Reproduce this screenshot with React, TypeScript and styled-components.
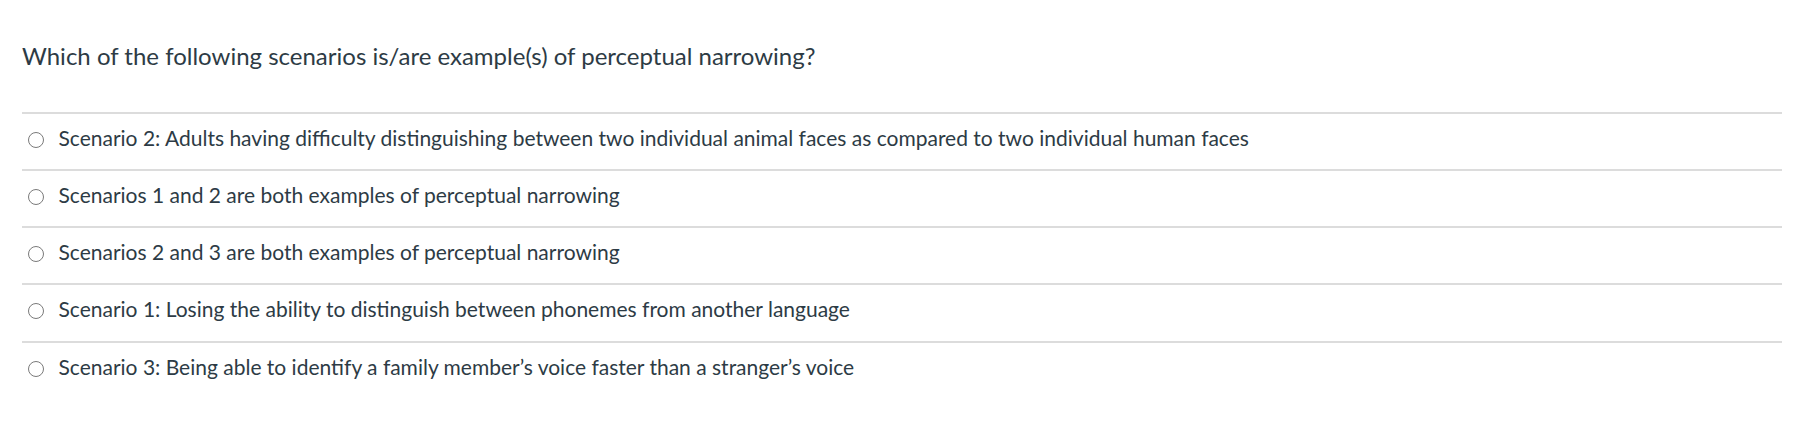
import React from 'react';
import styled, { createGlobalStyle } from 'styled-components';

const GlobalStyle = createGlobalStyle`
  body {
    margin: 0;
    background: #fff;
    font-family: Lato, "Open Sans", "Liberation Sans", sans-serif;
    color: #2d3b45;
  }
`;

const Page = styled.div`
  padding: 42px 18px 0 22px;
`;

const Question = styled.h2`
  margin: 0 0 41px;
  font-size: 24px;
  font-weight: 400;
  line-height: 1.2;
`;

const AnswerList = styled.div`
  display: flex;
  flex-direction: column;
`;

const AnswerRow = styled.label<{ $last?: boolean }>`
  display: flex;
  align-items: flex-start;
  border-top: 2px solid #dcdcdc;
  padding: 11px 0 ${({ $last }) => ($last ? '40px' : '19px')};
  cursor: pointer;
`;

const Radio = styled.span`
  flex: none;
  width: 16px;
  height: 16px;
  box-sizing: border-box;
  margin: 7px 14.5px 0 6px;
  border: 1.5px solid #7a7a7a;
  border-radius: 50%;
  background: #fff;
`;

const AnswerText = styled.span`
  font-size: 21px;
  line-height: 1.2;
`;

const answers = [
  'Scenario 2: Adults having difficulty distinguishing between two individual animal faces as compared to two individual human faces',
  'Scenarios 1 and 2 are both examples of perceptual narrowing',
  'Scenarios 2 and 3 are both examples of perceptual narrowing',
  'Scenario 1: Losing the ability to distinguish between phonemes from another language',
  'Scenario 3: Being able to identify a family member\u2019s voice faster than a stranger\u2019s voice',
];

export default function App() {
  return (
    <>
      <GlobalStyle />
      <Page>
        <Question>Which of the following scenarios is/are example(s) of perceptual narrowing?</Question>
        <AnswerList>
          {answers.map((a, i) => (
            <AnswerRow key={i} $last={i === answers.length - 1}>
              <Radio />
              <AnswerText>{a}</AnswerText>
            </AnswerRow>
          ))}
        </AnswerList>
      </Page>
    </>
  );
}
